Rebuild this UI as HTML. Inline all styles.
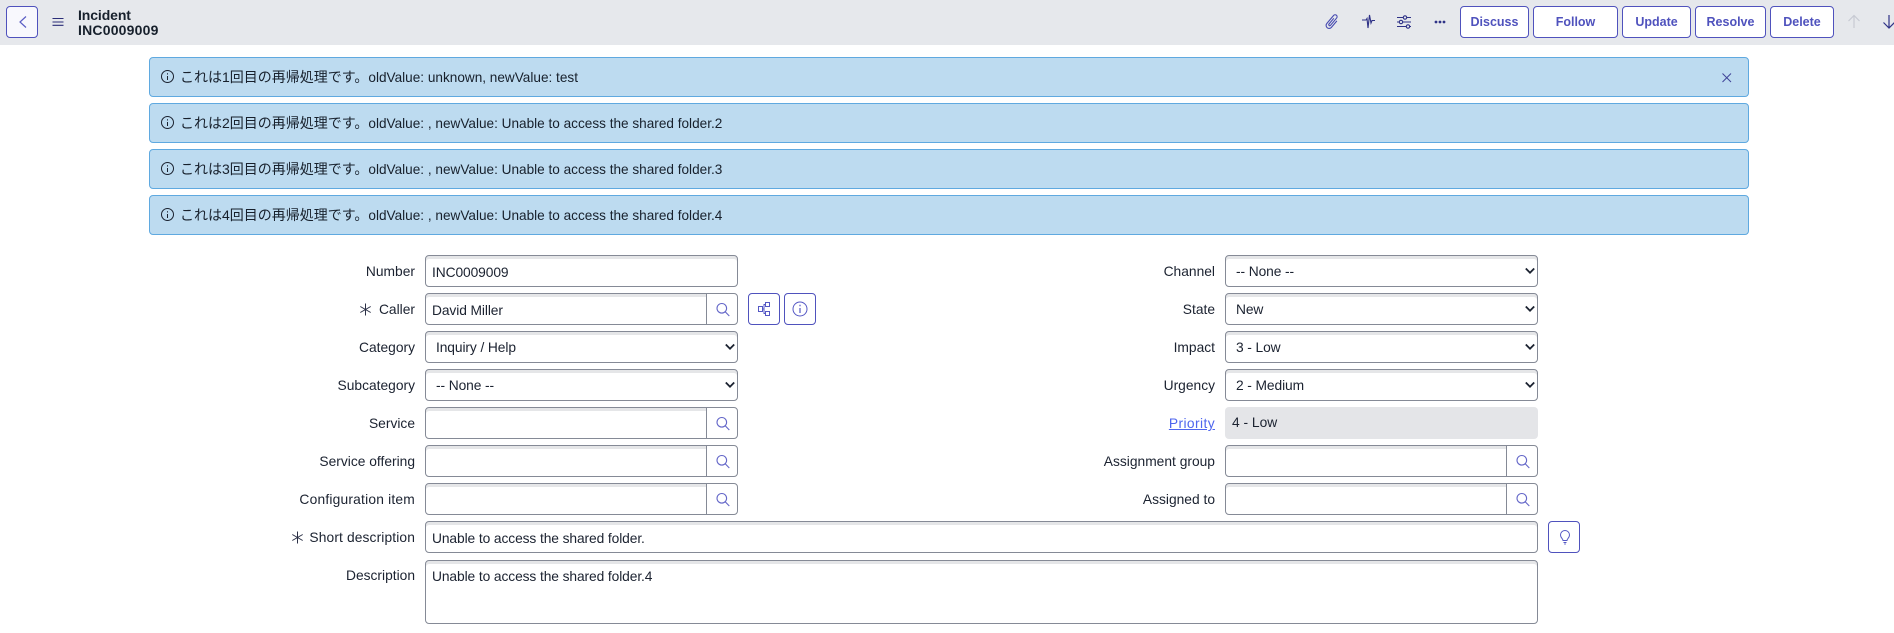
<!DOCTYPE html>
<html lang="ja">
<head>
<meta charset="utf-8">
<title>Incident INC0009009</title>
<style>
html,body{margin:0;padding:0;background:#fff;width:1894px;height:633px;overflow:hidden}
body{position:relative;font-family:"Liberation Sans","Noto Sans CJK JP",sans-serif;font-size:14px;color:#1b2230}
.abs,.btn,.alert,.lbl,.f,.s,.ic{position:absolute;box-sizing:border-box}
#hdr{position:absolute;left:0;top:0;width:1894px;height:45px;background:#e6e8ec}
.title{position:absolute;left:78px;font-weight:bold;font-size:14px;line-height:16px;color:#17202c}
.btn{top:6px;height:32px;border:1px solid #4f52bd;border-radius:4px;background:#fff;color:#4f52bd;font:bold 12.5px/30px "Liberation Sans",sans-serif;text-align:center;padding:0}
.alert{left:149px;width:1600px;height:40px;background:#bddbf0;border:1px solid #5fa9e0;border-radius:4px;font-size:13.6px;line-height:39px;padding-left:30px;color:#17202c;white-space:nowrap}
.alert b{font-weight:normal;font-size:14px}
.alert svg{position:absolute;left:10px;top:11px}
.lbl{right:0;width:auto;height:32px;line-height:34px;font-size:13.8px;white-space:nowrap;text-align:right;color:#1b2230}
.f{height:32px;border:1px solid #858a96;border-radius:4px;background:#fff;box-shadow:inset 0 3px 0 #e5e6e8;font:13.8px/28px "Liberation Sans",sans-serif;letter-spacing:-.1px;color:#1b2230;padding:2px 6px 0;margin:0;outline:0;display:block}
textarea.f{resize:none;line-height:18px;padding-top:7px;overflow:hidden}
.s{-webkit-appearance:none;appearance:none;padding-left:10px}
.sq{position:absolute;box-sizing:border-box;height:32px;width:32px;border:1px solid #4f52bd;border-radius:4px;background:#fff}
.mag{position:absolute;box-sizing:border-box;height:32px;width:32px;border:1px solid #858a96;border-radius:0 4px 4px 0;background:#fff}
.chev{position:absolute;pointer-events:none}
a{color:#4f66ee;letter-spacing:.4px}
</style>
</head>
<body>
<div id="hdr"></div>

<div class="abs" style="left:6px;top:6px;width:32px;height:32px;border:1px solid #4f52bd;border-radius:4px;background:#f8f8fd"></div>
<svg class="abs" style="left:0;top:0" width="80" height="45" fill="none">
<path d="M26 16.500L20 22L26 27.500" stroke="#5a5dc4" stroke-width="1.200"/>
<path d="M52.500 18.500H63.500M52.500 22H63.500M52.500 25.300H63.500" stroke="#2a2d78" stroke-width="1.100"/>
</svg>
<div class="title" style="top:7px;letter-spacing:-.1px">Incident</div>
<div class="title" style="top:22px;letter-spacing:.2px">INC0009009</div>

<svg class="abs" style="left:1320px;top:10px" width="132" height="24" fill="none" stroke="#2f3287" stroke-width="1.100">
<path transform="rotate(40 12 12)" d="M15 8V16.500a3 3 0 0 1-6 0V6a2 2 0 0 1 4 0V15.500a1 1 0 0 1-2 0V8" stroke="#464ab0"/>
<path d="M42 10H46L47 8.500L48 18L49.500 5L51 13L52 10.500H55"/>
<path d="M77 7.500H83M87 7.500H91M77 12H79M83 12H91M77 16.500H86M90 16.500H91"/>
<circle cx="85" cy="7.500" r="1.700"/><circle cx="81" cy="12" r="1.700"/><circle cx="88" cy="16.500" r="1.700"/>
<circle cx="116" cy="12" r="1.400" fill="#2f3287" stroke="none"/><circle cx="120" cy="12" r="1.400" fill="#2f3287" stroke="none"/><circle cx="124" cy="12" r="1.400" fill="#2f3287" stroke="none"/>
</svg>

<div class="btn" style="left:1460px;width:69px">Discuss</div>
<div class="btn" style="left:1533px;width:85px">Follow</div>
<div class="btn" style="left:1622px;width:69px">Update</div>
<div class="btn" style="left:1695px;width:71px">Resolve</div>
<div class="btn" style="left:1770px;width:64px">Delete</div>

<svg class="abs" style="left:1844px;top:10px" width="50" height="24" fill="none" stroke-width="1.200">
<path d="M10 18V5.500M4.500 11L10 5.500L15.500 11" stroke="#c7cad3"/>
<path d="M45 5V18M39.500 12.500L45 18L50.500 12.500" stroke="#2f3287"/>
</svg>

<div class="alert" style="top:57px"><svg width="16" height="16" fill="none" stroke="#1b2230"><circle cx="7.500" cy="7.500" r="6" stroke-width="1"/><path d="M7.500 7V11M7.500 4.300V5.500" stroke-width="1"/></svg><b>これは1回目の再帰処理です。</b>oldValue: unknown, newValue: test
<svg style="left:1571px;top:14px" width="12" height="12" fill="none" stroke="#3f4398" stroke-width="1"><path d="M1.500 1.500L10 10M10 1.500L1.500 10"/></svg></div>
<div class="alert" style="top:103px"><svg width="16" height="16" fill="none" stroke="#1b2230"><circle cx="7.500" cy="7.500" r="6" stroke-width="1"/><path d="M7.500 7V11M7.500 4.300V5.500" stroke-width="1"/></svg><b>これは2回目の再帰処理です。</b>oldValue: , newValue: Unable to access the shared folder.2</div>
<div class="alert" style="top:149px"><svg width="16" height="16" fill="none" stroke="#1b2230"><circle cx="7.500" cy="7.500" r="6" stroke-width="1"/><path d="M7.500 7V11M7.500 4.300V5.500" stroke-width="1"/></svg><b>これは3回目の再帰処理です。</b>oldValue: , newValue: Unable to access the shared folder.3</div>
<div class="alert" style="top:195px"><svg width="16" height="16" fill="none" stroke="#1b2230"><circle cx="7.500" cy="7.500" r="6" stroke-width="1"/><path d="M7.500 7V11M7.500 4.300V5.500" stroke-width="1"/></svg><b>これは4回目の再帰処理です。</b>oldValue: , newValue: Unable to access the shared folder.4</div>

<!-- left labels -->
<div class="lbl" style="left:200px;width:215px;top:255px">Number</div>
<div class="lbl" style="left:200px;width:215px;top:293px">Caller</div>
<div class="lbl" style="left:200px;width:215px;top:331px">Category</div>
<div class="lbl" style="left:200px;width:215px;top:369px">Subcategory</div>
<div class="lbl" style="left:200px;width:215px;top:407px">Service</div>
<div class="lbl" style="left:200px;width:215px;top:445px">Service offering</div>
<div class="lbl" style="left:200px;width:215px;top:483px;letter-spacing:.2px">Configuration item</div>
<div class="lbl" style="left:200px;width:215px;top:521px;letter-spacing:.12px">Short description</div>
<div class="lbl" style="left:200px;width:215px;top:559px">Description</div>

<!-- stars -->
<svg class="abs" style="left:359px;top:303px" width="13" height="13" fill="none" stroke="#2a2f45" stroke-width="1"><path d="M6.500 .5V12.500M1.300 3.500L11.700 9.500M11.700 3.500L1.300 9.500"/></svg>
<svg class="abs" style="left:291px;top:531px" width="13" height="13" fill="none" stroke="#2a2f45" stroke-width="1"><path d="M6.500 .5V12.500M1.300 3.500L11.700 9.500M11.700 3.500L1.300 9.500"/></svg>

<!-- left fields -->
<input class="f" style="left:425px;top:255px;width:313px" value="INC0009009">
<input class="f" style="left:425px;top:293px;width:282px;border-radius:4px 0 0 4px" value="David Miller">
<select class="f s" style="left:425px;top:331px;width:313px"><option>Inquiry / Help</option></select>
<select class="f s" style="left:425px;top:369px;width:313px"><option>-- None --</option></select>
<input class="f" style="left:425px;top:407px;width:282px;border-radius:4px 0 0 4px">
<input class="f" style="left:425px;top:445px;width:282px;border-radius:4px 0 0 4px">
<input class="f" style="left:425px;top:483px;width:282px;border-radius:4px 0 0 4px">

<div class="mag" style="left:706px;top:293px"></div>
<div class="mag" style="left:706px;top:407px"></div>
<div class="mag" style="left:706px;top:445px"></div>
<div class="mag" style="left:706px;top:483px"></div>

<svg class="chev" style="left:723px;top:342px" width="14" height="10" fill="none" stroke="#1b2230" stroke-width="1.800"><path d="M2.800 2.500L7 6.700L11.200 2.500"/></svg>
<svg class="chev" style="left:723px;top:380px" width="14" height="10" fill="none" stroke="#1b2230" stroke-width="1.800"><path d="M2.800 2.500L7 6.700L11.200 2.500"/></svg>

<!-- caller buttons -->
<div class="sq" style="left:748px;top:293px"></div>
<div class="sq" style="left:784px;top:293px"></div>
<svg class="abs" style="left:748px;top:293px" width="70" height="32" fill="none" stroke="#5457c4" stroke-width="1">
<rect x="10.500" y="13.500" width="4" height="5"/><rect x="17.500" y="9.500" width="4" height="4"/><rect x="17.500" y="18.500" width="4" height="4"/>
<path d="M14.500 16H16V11.500H17.500M16 16V20.500H17.500"/>
<circle cx="52" cy="16" r="7"/><path d="M52 15V20M52 11.800V13.200" stroke-width="1.200"/>
</svg>

<!-- right labels -->
<div class="lbl" style="left:1000px;width:215px;top:255px">Channel</div>
<div class="lbl" style="left:1000px;width:215px;top:293px">State</div>
<div class="lbl" style="left:1000px;width:215px;top:331px">Impact</div>
<div class="lbl" style="left:1000px;width:215px;top:369px">Urgency</div>
<div class="lbl" style="left:1000px;width:215px;top:407px"><a href="#">Priority</a></div>
<div class="lbl" style="left:1000px;width:215px;top:445px">Assignment group</div>
<div class="lbl" style="left:1000px;width:215px;top:483px">Assigned to</div>

<!-- right fields -->
<select class="f s" style="left:1225px;top:255px;width:313px"><option>-- None --</option></select>
<select class="f s" style="left:1225px;top:293px;width:313px"><option>New</option></select>
<select class="f s" style="left:1225px;top:331px;width:313px"><option>3 - Low</option></select>
<select class="f s" style="left:1225px;top:369px;width:313px"><option>2 - Medium</option></select>
<div class="abs" style="left:1225px;top:407px;width:313px;height:32px;background:#e4e5e8;border-radius:4px;padding-left:7px;font-size:13.8px;line-height:32px">4 - Low</div>
<input class="f" style="left:1225px;top:445px;width:282px;border-radius:4px 0 0 4px">
<input class="f" style="left:1225px;top:483px;width:282px;border-radius:4px 0 0 4px">
<div class="mag" style="left:1506px;top:445px"></div>
<div class="mag" style="left:1506px;top:483px"></div>

<svg class="chev" style="left:1523px;top:266px" width="14" height="10" fill="none" stroke="#1b2230" stroke-width="1.800"><path d="M2.800 2.500L7 6.700L11.200 2.500"/></svg>
<svg class="chev" style="left:1523px;top:304px" width="14" height="10" fill="none" stroke="#1b2230" stroke-width="1.800"><path d="M2.800 2.500L7 6.700L11.200 2.500"/></svg>
<svg class="chev" style="left:1523px;top:342px" width="14" height="10" fill="none" stroke="#1b2230" stroke-width="1.800"><path d="M2.800 2.500L7 6.700L11.200 2.500"/></svg>
<svg class="chev" style="left:1523px;top:380px" width="14" height="10" fill="none" stroke="#1b2230" stroke-width="1.800"><path d="M2.800 2.500L7 6.700L11.200 2.500"/></svg>

<!-- magnifiers -->
<svg class="abs" style="left:715px;top:302px" width="16" height="16" fill="none" stroke="#6366c8" stroke-width="1.100"><circle cx="6.800" cy="6.300" r="4.800"/><path d="M10.200 9.800L14.300 14"/></svg>
<svg class="abs" style="left:715px;top:416px" width="16" height="16" fill="none" stroke="#6366c8" stroke-width="1.100"><circle cx="6.800" cy="6.300" r="4.800"/><path d="M10.200 9.800L14.300 14"/></svg>
<svg class="abs" style="left:715px;top:454px" width="16" height="16" fill="none" stroke="#6366c8" stroke-width="1.100"><circle cx="6.800" cy="6.300" r="4.800"/><path d="M10.200 9.800L14.300 14"/></svg>
<svg class="abs" style="left:715px;top:492px" width="16" height="16" fill="none" stroke="#6366c8" stroke-width="1.100"><circle cx="6.800" cy="6.300" r="4.800"/><path d="M10.200 9.800L14.300 14"/></svg>
<svg class="abs" style="left:1515px;top:454px" width="16" height="16" fill="none" stroke="#6366c8" stroke-width="1.100"><circle cx="6.800" cy="6.300" r="4.800"/><path d="M10.200 9.800L14.300 14"/></svg>
<svg class="abs" style="left:1515px;top:492px" width="16" height="16" fill="none" stroke="#6366c8" stroke-width="1.100"><circle cx="6.800" cy="6.300" r="4.800"/><path d="M10.200 9.800L14.300 14"/></svg>

<!-- short description & description -->
<input class="f" style="left:425px;top:521px;width:1113px" value="Unable to access the shared folder.">
<textarea class="f" style="left:425px;top:560px;width:1113px;height:64px">Unable to access the shared folder.4</textarea>
<div class="sq" style="left:1548px;top:521px"></div>
<svg class="abs" style="left:1557px;top:529px" width="16" height="17" fill="none" stroke="#5457c4" stroke-width="1"><path d="M6 11.500C6 9.800 3.500 8.800 3.500 6a4.500 4.500 0 0 1 9 0C12.500 8.800 10 9.800 10 11.500Z"/><path d="M6.500 13.500H9.500M7.200 15H8.800"/></svg>
</body>
</html>
